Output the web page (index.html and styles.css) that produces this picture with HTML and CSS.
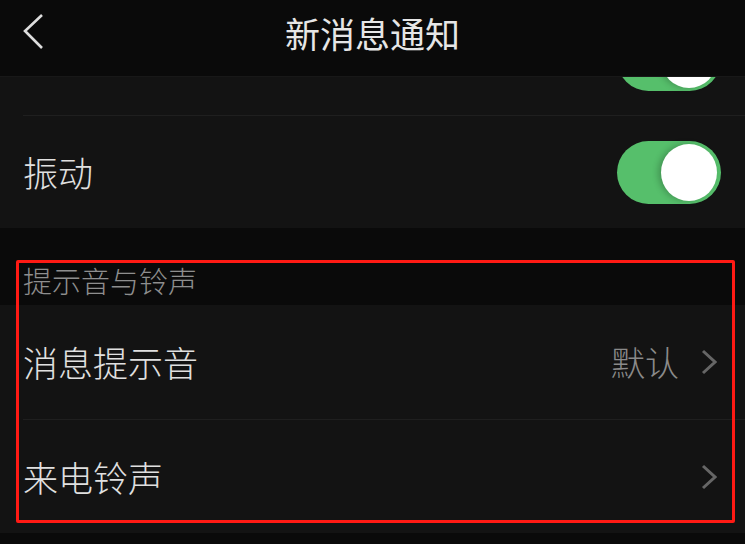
FILE: index.html
```html
<!DOCTYPE html>
<html lang="zh-CN">
<head>
<meta charset="utf-8">
<title>新消息通知</title>
<link rel="stylesheet" href="styles.css">
</head>
<body>
<div class="screen">
  <div class="group">
    <div class="row row-partial">
      <div class="switch"><span class="knob"></span></div>
    </div>
    <div class="divider"></div>
    <div class="row row-toggle">
      <span class="row-title">振动</span>
      <div class="switch"><span class="knob"></span></div>
    </div>
  </div>

  <div class="section-label">提示音与铃声</div>

  <div class="group">
    <div class="row row-link row-first">
      <span class="row-title">消息提示音</span>
      <span class="row-value">默认</span>
      <svg class="chevron" width="16" height="26" viewBox="0 0 16 26"><polyline points="2,2 14,13 2,24" fill="none" stroke="#666" stroke-width="3"/></svg>
    </div>
    <div class="divider"></div>
    <div class="row row-link row-last">
      <span class="row-title">来电铃声</span>
      <svg class="chevron" width="16" height="26" viewBox="0 0 16 26"><polyline points="2,2 14,13 2,24" fill="none" stroke="#666" stroke-width="3"/></svg>
    </div>
  </div>

  <header class="navbar">
    <svg class="back" width="24" height="38" viewBox="0 0 24 38"><polyline points="20,2 3,18 20,35" fill="none" stroke="#dedede" stroke-width="2.6"/></svg>
    <h1 class="nav-title">新消息通知</h1>
  </header>

  <div class="highlight"></div>
</div>
</body>
</html>
```

FILE: styles.css
```css
* { box-sizing: border-box; }
html, body {
  margin: 0;
  padding: 0;
  background: #0a0a0a;
}
body {
  font-family: "Noto Sans CJK SC", "Noto Sans", sans-serif;
  font-weight: 300;
  width: 745px;
  height: 544px;
  overflow: hidden;
}
.screen {
  position: relative;
  width: 745px;
  height: 544px;
  padding-top: 4px;
  background: #0a0a0a;
  overflow: hidden;
}
.navbar {
  position: absolute;
  left: 0;
  top: 0;
  width: 745px;
  height: 77px;
  background: #0a0a0a;
  border-bottom: 1px solid #181818;
  display: flex;
  align-items: center;
  justify-content: center;
  padding-bottom: 10px;
}
.back {
  position: absolute;
  left: 22px;
  top: 13px;
}
.nav-title {
  margin: 0;
  font-size: 35px;
  font-weight: 400;
  line-height: 40px;
  color: #e6e6e6;
  letter-spacing: 0;
}
.group {
  background: #131313;
}
.row {
  display: flex;
  align-items: center;
  padding-left: 23px;
  padding-right: 24px;
}
.row-partial {
  height: 111px;
  justify-content: flex-end;
}
.row-toggle {
  height: 112px;
  justify-content: space-between;
}
.row-first { height: 114px; }
.row-last { height: 113px; }
.row-link {
  padding-right: 28px;
}
.row-title {
  font-size: 35px;
  line-height: 40px;
  color: #e0e0e0;
  flex: 1;
}
.row-value {
  font-size: 34px;
  line-height: 40px;
  color: #8a8a8a;
  margin-right: 22px;
}
.divider {
  height: 1px;
  margin-left: 23px;
  background: #1f1f1f;
}
.switch {
  position: relative;
  width: 104px;
  height: 63px;
  border-radius: 32px;
  background: #56bf6b;
  flex: none;
}
.knob {
  position: absolute;
  right: 4px;
  top: 3px;
  width: 56px;
  height: 57px;
  border-radius: 50%;
  background: #ffffff;
  box-shadow: -3px 0 6px rgba(0, 0, 0, 0.22);
}
.section-label {
  height: 77px;
  padding-top: 37px;
  padding-left: 23px;
  font-size: 29px;
  line-height: 30px;
  color: #8e8e8e;
}
.highlight {
  position: absolute;
  left: 16px;
  top: 260px;
  width: 719px;
  height: 263px;
  border: 3px solid #ff1a14;
  border-radius: 2px;
}
```
